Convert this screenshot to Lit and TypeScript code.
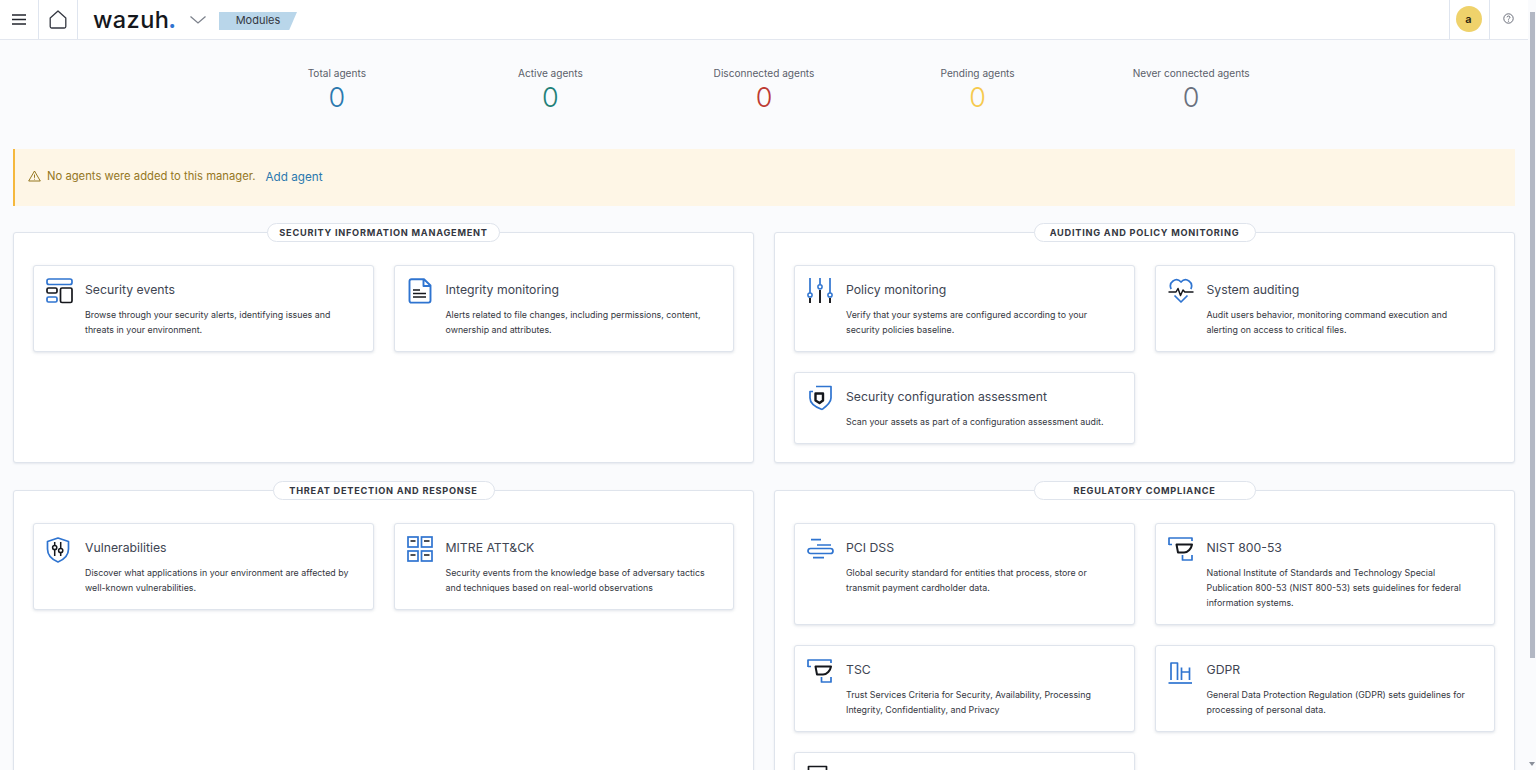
import { LitElement, css, html, svg } from "lit";
import { customElement } from "lit/decorators.js";

const BLUE = "#2f74d0";
const INK = "#15171c";

const line = (d: string, color: string, w = 1.7) =>
  svg`<path d=${d} fill="none" stroke=${color} stroke-width=${w} stroke-linejoin="round" />`;
const box = (x: number, y: number, w: number, h: number, r: number, color: string) =>
  svg`<rect x=${x} y=${y} width=${w} height=${h} rx=${r} fill="none" stroke=${color} stroke-width="1.7" />`;
const dot = (x: number, y: number, color: string) =>
  svg`<circle cx=${x} cy=${y} r="2.1" fill="#fff" stroke=${color} stroke-width="1.5" />`;

const shieldBracket = svg`
  ${line("M1 9V2H24V5M1 8.5H4M14.5 19V24H24V19", BLUE)}
  ${line("M8.5 8.5H24C23.4 12.5 20 16.5 16 16.5H10Z", INK, 2)}
`;

const ICONS: Record<string, unknown> = {
  events: svg`
    ${box(1, 1, 25, 5.5, 2, BLUE)}
    ${box(1, 10, 10, 5, 1.5, INK)}
    ${box(1, 19, 10, 5, 1.5, BLUE)}
    ${box(14.5, 10, 11.5, 14.5, 1.5, INK)}`,
  integrity: svg`
    ${line("M4.5 1.2H17L23.5 7.5V22.5C23.5 23.8 22.8 24.6 21.5 24.6H4.5C3.2 24.6 2.5 23.8 2.5 22.5V3.2C2.5 2 3.2 1.2 4.5 1.2ZM16.5 1.5V8H23.3", BLUE, 1.9)}
    ${line("M6 12H13M6 15.5H19M6 19H19", INK, 1.5)}`,
  policy: svg`
    ${line("M3 0V15M13 0V6.5M23 0V15", BLUE)}
    ${line("M3 20V25M13 12V25M23 20V25", INK, 1.9)}
    ${dot(3, 17, BLUE)}${dot(13, 8.8, BLUE)}${dot(23, 17, BLUE)}`,
  sca: svg`
    ${line("M9 1.5H24V13C24 18 19 21.5 15 24.5", BLUE)}
    ${line("M6 6.5H3V13C3 18 8 22 15 24.5", BLUE)}
    ${line("M8.5 8.5H16V15.5L12.5 18L8.5 15.5Z", INK, 2.4)}`,
  audit: svg`
    ${line("M3.2 11C0 4.5 8 -1.5 13 4C18 -1.5 26 4.5 22.8 11", BLUE)}
    ${line("M6.5 17.5L13 24L19.5 17.5", BLUE)}
    ${line("M0.5 14H8L10 10.5L12.5 17.5L15 12L16.8 14H25.5", INK, 1.5)}`,
  vuln: svg`
    ${line("M12 2L22.5 5.5V13C22.5 19 18 23.5 12 26C6 23.5 1.5 19 1.5 13V5.5Z", BLUE)}
    ${line("M8.7 6V20M14.7 6V20", INK, 1.5)}
    ${dot(8.7, 11.5, INK)}${dot(14.7, 14.5, INK)}`,
  mitre: svg`
    ${box(1, 1, 10, 10, 0, BLUE)}${box(14.5, 1, 10.5, 10, 0, BLUE)}
    ${box(1, 15, 10, 10, 0, BLUE)}${box(14.5, 15, 10.5, 10, 0, BLUE)}
    ${line("M3.5 5H8.5M17 5H22.5M3.5 19H8.5M17 19H22.5", INK, 1.5)}`,
  pci: svg`
    ${line("M4 3.7H14M10 9H24M6 21.7H17", BLUE)}
    ${box(1, 12.5, 25, 5, 2.5, BLUE)}`,
  nist: shieldBracket,
  gdpr: svg`
    ${line("M3 22V5H9.5V22M13.5 22V9.5M21.5 22V9.5M13.5 14H21.5", BLUE)}
    ${line("M0.5 25H24", BLUE)}`,
  hipaa: svg`${line("M1.5 8V1.5H19.5V8", INK)}`,
};

interface Mod {
  icon: string;
  title?: string;
  text?: string;
}

interface Group {
  title: string;
  items: Mod[];
}

const LEFT: Group[] = [
  {
    title: "SECURITY INFORMATION MANAGEMENT",
    items: [
      { icon: "events", title: "Security events", text: "Browse through your security alerts, identifying issues and threats in your environment." },
      { icon: "integrity", title: "Integrity monitoring", text: "Alerts related to file changes, including permissions, content, ownership and attributes." },
    ],
  },
  {
    title: "THREAT DETECTION AND RESPONSE",
    items: [
      { icon: "vuln", title: "Vulnerabilities", text: "Discover what applications in your environment are affected by well-known vulnerabilities." },
      { icon: "mitre", title: "MITRE ATT&CK", text: "Security events from the knowledge base of adversary tactics and techniques based on real-world observations" },
    ],
  },
];

const RIGHT: Group[] = [
  {
    title: "AUDITING AND POLICY MONITORING",
    items: [
      { icon: "policy", title: "Policy monitoring", text: "Verify that your systems are configured according to your security policies baseline." },
      { icon: "audit", title: "System auditing", text: "Audit users behavior, monitoring command execution and alerting on access to critical files." },
      { icon: "sca", title: "Security configuration assessment", text: "Scan your assets as part of a configuration assessment audit." },
    ],
  },
  {
    title: "REGULATORY COMPLIANCE",
    items: [
      { icon: "pci", title: "PCI DSS", text: "Global security standard for entities that process, store or transmit payment cardholder data." },
      { icon: "nist", title: "NIST 800-53", text: "National Institute of Standards and Technology Special Publication 800-53 (NIST 800-53) sets guidelines for federal information systems." },
      { icon: "nist", title: "TSC", text: "Trust Services Criteria for Security, Availability, Processing Integrity, Confidentiality, and Privacy" },
      { icon: "gdpr", title: "GDPR", text: "General Data Protection Regulation (GDPR) sets guidelines for processing of personal data." },
      // only the top of this card is on screen
      { icon: "hipaa" },
    ],
  },
];

const STATS = [
  { label: "Total agents", color: "#2b78ae" },
  { label: "Active agents", color: "#1f8178" },
  { label: "Disconnected agents", color: "#bd3a32" },
  { label: "Pending agents", color: "#f6ca4e" },
  { label: "Never connected agents", color: "#69707d" },
];

@customElement("app-root")
export class AppRoot extends LitElement {
  static styles = css`
    :host {
      display: flex;
      height: 770px;
      overflow: hidden;
      background: #fafbfd;
      color: #343741;
      font-family: Inter, "Liberation Sans", sans-serif;
    }
    .page {
      flex: 1;
      min-width: 0;
      display: flex;
      flex-direction: column;
      overflow: hidden;
    }
    .scrollbar {
      width: 8px;
      flex: none;
      background: #fafbfd;
      display: flex;
      flex-direction: column;
      align-items: center;
      position: relative;
    }
    .thumb {
      width: 5px;
      height: 646px;
      margin-top: 12px;
      background: #b3b8c4;
    }
    .arrow {
      position: absolute;
      bottom: 4px;
      border: 3px solid transparent;
      border-top: 4px solid #8a8f9a;
      border-bottom: 0;
    }

    header {
      height: 39px;
      flex: none;
      display: flex;
      align-items: stretch;
      background: #fff;
      border-bottom: 1px solid #e3e7ef;
    }
    .cell {
      display: flex;
      align-items: center;
      justify-content: center;
    }
    .burger {
      width: 38px;
      border-right: 1px solid #dfe5ef;
    }
    .home {
      width: 38px;
      border-right: 1px solid #dfe5ef;
    }
    .logo {
      margin-left: 15px;
      width: 81px;
      font-size: 23.5px;
      font-weight: 500;
      letter-spacing: 0.4px;
      color: #15171c;
      display: flex;
      align-items: center;
      white-space: nowrap;
    }
    .logo b {
      font-weight: 700;
      color: #2f74d0;
      margin-left: -1px;
    }
    .chev {
      margin-left: 16px;
      width: 16px;
    }
    .crumb {
      margin: 12px 0 0 13px;
      width: 78px;
      height: 18px;
      background: #b9d6ea;
      clip-path: polygon(0 0, 100% 0, 90% 100%, 0 100%);
      font-size: 11px;
      line-height: 17px;
      text-align: center;
      color: #343741;
    }
    .spacer {
      flex: 1;
    }
    .user {
      width: 39px;
      border-left: 1px solid #dfe5ef;
      border-right: 1px solid #dfe5ef;
    }
    .avatar {
      width: 26px;
      height: 26px;
      border-radius: 50%;
      background: #efd26b;
      font-size: 11px;
      font-weight: 600;
      line-height: 26px;
      text-align: center;
      color: #2b2410;
      margin: -1px 2px 0 0;
    }
    .help {
      width: 38px;
      padding: 0 2px 2px 0;
      box-sizing: border-box;
    }

    .stats {
      flex: none;
      display: flex;
      justify-content: center;
      padding-top: 26px;
    }
    .stat {
      width: 213.6px;
      text-align: center;
    }
    .stat span {
      display: block;
      font-size: 10.1px;
      line-height: 14px;
      color: #5a5f6b;
    }
    .stat strong {
      display: block;
      font-size: 27px;
      font-weight: 300;
      line-height: 32px;
      margin-top: 2px;
    }

    .callout {
      flex: none;
      margin: 35px 13px 26px;
      height: 57px;
      box-sizing: border-box;
      display: flex;
      align-items: center;
      padding-left: 13px;
      background: #fef6e6;
      border-left: 2px solid #f5b83d;
      font-size: 11.25px;
      color: #8a6a0a;
    }
    .callout svg {
      margin-right: 6px;
      margin-top: -4px;
    }
    .callout span {
      margin-top: -3px;
      opacity: 0.9;
    }
    .callout a {
      margin: -2px 0 0 10px;
      color: #2b78ae;
      font-size: 11.7px;
    }

    .columns {
      display: grid;
      grid-template-columns: 1fr 1fr;
      column-gap: 20px;
      row-gap: 27px;
      margin: 0 13px;
    }
    .panel {
      box-sizing: border-box;
      background: #fff;
      border: 1px solid #dfe4ec;
      border-radius: 3px;
      box-shadow: 0 1px 2px rgba(152, 162, 179, 0.2);
      padding: 0 19px 18px;
      display: flex;
      flex-direction: column;
    }
    .pill {
      align-self: center;
      box-sizing: border-box;
      min-width: 222px;
      height: 19px;
      margin: -10px 0 23px;
      padding: 0 11px;
      background: #fff;
      border: 1px solid #dfe4ec;
      border-radius: 10px;
      font-size: 9.2px;
      font-weight: 700;
      letter-spacing: 0.75px;
      line-height: 17px;
      text-align: center;
      color: #343741;
    }
    .grid {
      display: grid;
      grid-template-columns: 1fr 1fr;
      gap: 20px;
      align-items: stretch;
    }
    .card {
      box-sizing: border-box;
      background: #fff;
      border: 1px solid #dfe4ec;
      border-radius: 3px;
      box-shadow: 0 1px 3px rgba(152, 162, 179, 0.3);
      padding: 12px 16px 14px 12px;
      display: flex;
    }
    .card svg {
      flex: none;
      width: 28px;
      height: 28px;
      margin-right: 11px;
    }
    .body {
      min-width: 0;
      padding-top: 3px;
    }
    .card h3 {
      margin: 0 0 8px;
      font-size: 12.25px;
      font-weight: 400;
      line-height: 18px;
      color: #404552;
    }
    .card p {
      margin: 0;
      font-size: 8.85px;
      line-height: 15px;
      color: #343741;
    }
  `;

  private renderGroup(g: Group) {
    return html`<section class="panel">
      <div class="pill">${g.title}</div>
      <div class="grid">
        ${g.items.map(
          (m) => html`<div class="card">
            <svg viewBox="0 0 28 28">${ICONS[m.icon]}</svg>
            ${m.title
              ? html`<div class="body">
                  <h3>${m.title}</h3>
                  <p>${m.text}</p>
                </div>`
              : ""}
          </div>`
        )}
      </div>
    </section>`;
  }

  render() {
    return html`<div class="page">
        <header>
          <div class="cell burger">
            <svg width="14" height="11" viewBox="0 0 14 11">
              <path d="M0 1h14M0 5.5h14M0 10h14" stroke="#23262e" stroke-width="1.4" fill="none" />
            </svg>
          </div>
          <div class="cell home">
            <svg width="18" height="19" viewBox="0 0 18 19">
              <path
                d="M1.2 8L9 1L16.8 8V16.5C16.8 17.4 16.3 18 15.4 18H2.6C1.7 18 1.2 17.4 1.2 16.5Z"
                fill="none"
                stroke="#343741"
                stroke-width="1.3"
                stroke-linejoin="round"
              />
            </svg>
          </div>
          <div class="logo">wazuh<b>.</b></div>
          <div class="cell chev">
            <svg width="16" height="8" viewBox="0 0 16 8">
              <path d="M0.5 0.5L8 7L15.5 0.5" fill="none" stroke="#7d828c" stroke-width="1.3" />
            </svg>
          </div>
          <div class="crumb">Modules</div>
          <div class="spacer"></div>
          <div class="cell user"><div class="avatar">a</div></div>
          <div class="cell help">
            <svg width="11" height="11" viewBox="0 0 11 11">
              <circle cx="5.5" cy="5.5" r="4.7" fill="none" stroke="#5a5f6b" stroke-width="0.9" />
              <path d="M4 4.3C4 2.6 7 2.6 7 4.3C7 5.3 5.5 5.3 5.5 6.6" fill="none" stroke="#5a5f6b" stroke-width="0.9" />
              <circle cx="5.5" cy="8.1" r="0.6" fill="#5a5f6b" />
            </svg>
          </div>
        </header>
        <div class="stats">
          ${STATS.map(
            (s) => html`<div class="stat">
              <span>${s.label}</span>
              <strong style="color:${s.color}">0</strong>
            </div>`
          )}
        </div>
        <div class="callout">
          <svg width="13" height="12" viewBox="0 0 13 12">
            <path d="M6.5 1L12.3 11H0.7Z" fill="none" stroke="#8a6a0a" stroke-width="0.9" stroke-linejoin="round" />
            <path d="M6.5 4.5V7.8M6.5 8.8V9.6" stroke="#8a6a0a" stroke-width="0.9" />
          </svg>
          <span>No agents were added to this manager.</span>
          <a>Add agent</a>
        </div>
        <div class="columns">
          ${this.renderGroup(LEFT[0])}${this.renderGroup(RIGHT[0])}
          ${this.renderGroup(LEFT[1])}${this.renderGroup(RIGHT[1])}
        </div>
      </div>
      <div class="scrollbar">
        <div class="thumb"></div>
        <div class="arrow"></div>
      </div>`;
  }
}

declare global {
  interface HTMLElementTagNameMap {
    "app-root": AppRoot;
  }
}
